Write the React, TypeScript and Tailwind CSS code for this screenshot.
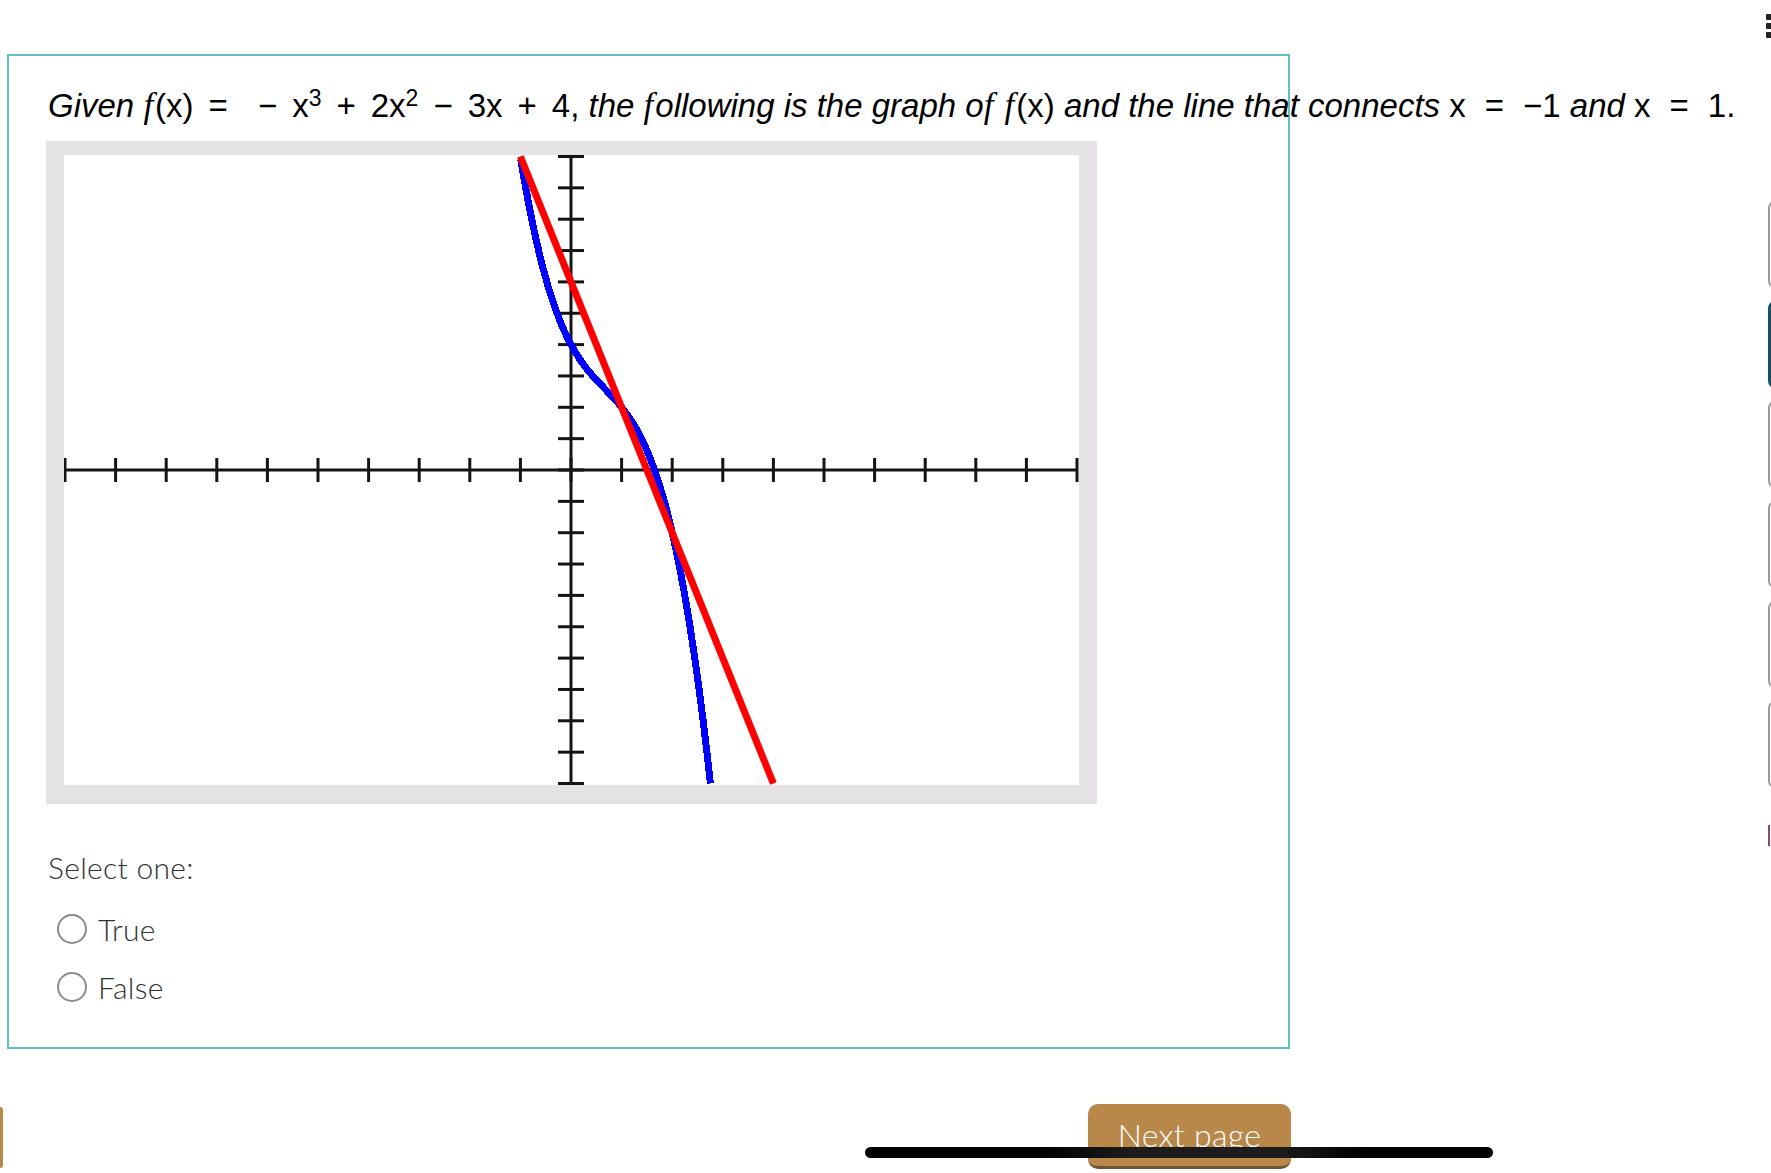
import React from 'react'

const X = (x: number) => 507 + x * 50.6
const Y = (y: number) => 315 - y * 31.35

const f = (x: number) => -x * x * x + 2 * x * x - 3 * x + 4

function bluePoints() {
  const pts: string[] = []
  for (let x = -0.99; x <= 2.756; x += 0.015) {
    const y = f(x)
    if (y > 10 || y < -10) continue
    pts.push(`${X(x).toFixed(1)},${Y(y).toFixed(1)}`)
  }
  pts.push(`${X(2.755).toFixed(1)},${Y(-10).toFixed(1)}`)
  return pts.join(' ')
}

function Graph() {
  const xTicks = Array.from({ length: 21 }, (_, i) => i - 10)
  const yTicks = Array.from({ length: 21 }, (_, i) => i - 10)
  return (
    <div className="w-[1051px] h-[663px] bg-[#e6e3e6] pl-[18px] pt-[14px]">
      <div className="w-[1015px] h-[630px] bg-white">
        <svg width="1015" height="630" viewBox="0 0 1015 630">
          <g stroke="#141414" strokeWidth="3">
            <line x1={X(-10)} y1={Y(0)} x2={X(10)} y2={Y(0)} />
            <line x1={X(0)} y1={Y(10)} x2={X(0)} y2={Y(-10)} />
            {xTicks.map((t) => (
              <line key={'x' + t} x1={X(t)} y1={Y(0) - 12} x2={X(t)} y2={Y(0) + 12} />
            ))}
            {yTicks.map((t) => (
              <line key={'y' + t} x1={X(0) - 13} y1={Y(t)} x2={X(0) + 13} y2={Y(t)} />
            ))}
          </g>
          <polyline
            points={bluePoints()}
            fill="none"
            stroke="#0000ff"
            strokeWidth="7"
            shapeRendering="crispEdges"
          />
          <line
            x1={X(-1)}
            y1={Y(10)}
            x2={X(4)}
            y2={Y(-10)}
            stroke="#ff0000"
            strokeWidth="7"
          />
        </svg>
      </div>
    </div>
  )
}

const F = () => <span className="font-['Liberation_Serif',serif] italic text-[35px] pr-[2px]">f</span>
const Op = ({ c }: { c: string }) => <span className="px-[15px]">{c}</span>
const Eq = ({ c }: { c: string }) => <span className="px-[19px]">{c}</span>

function Radio({ label }: { label: string }) {
  return (
    <div className="flex items-center h-[40px]">
      <span className="ml-[10px] w-[30px] h-[30px] rounded-full border-[2.5px] border-[#8c8c8c] bg-white" />
      <span className="ml-[11px] text-[30px] text-[#333] font-light tracking-[0.3px]">{label}</span>
    </div>
  )
}

export default function App() {
  return (
    <div className="relative w-full h-[1173px] overflow-hidden bg-white flex font-['Lato',sans-serif]">
      <div className="w-[1765px] shrink-0 pl-[7px] pt-[54px]">
        <div className="w-[1283px] h-[995px] border-2 border-[#5fbfc2] pl-[39px] pt-[30px]">
          <div className="h-[40px] leading-[40px] whitespace-nowrap text-[33px] text-black font-['Liberation_Sans',Arial,sans-serif]">
            <i>Given </i>
            <F />
            (x)
            <Op c="=" />
            <Op c="−" />x<sup className="text-[23px]">3</sup>
            <Op c="+" />
            2x<sup className="text-[23px]">2</sup>
            <Op c="−" />
            3x
            <Op c="+" />
            4,
            <i>
              {' '}the <F />ollowing is the graph o<F />{' '}
            </i>
            <F />
            (x)
            <i> and the line that connects </i>x<Eq c="=" />−1<i> and </i>x<Eq c="=" />1.
          </div>
          <div className="mt-[15px] -ml-[2px]">
            <Graph />
          </div>
          <div className="mt-[43px] h-[40px] leading-[40px] text-[30px] text-[#333] font-light tracking-[0.3px]">
            Select one:
          </div>
          <div className="mt-[22px] flex flex-col gap-[18px] -ml-[1px]">
            <Radio label="True" />
            <Radio label="False" />
          </div>
        </div>
        <div className="mt-[55px] flex justify-between w-[1291px] -ml-[7px]">
          <div className="w-[3px] h-[61px] mt-[3px] rounded-r-[4px] bg-[#b8874a]" />
          <div className="w-[203px] h-[65px] rounded-[10px] bg-[#b8874a] border-b-[3px] border-[#6e5431] flex items-center justify-center text-white text-[32px] font-light tracking-[0.3px]">
            Next page
          </div>
        </div>
      </div>
      <div className="w-[40px] shrink-0 pt-[14px] flex flex-col">
        <div className="flex flex-col gap-[3px] ml-[1px]">
          <span className="w-[6px] h-[6px] rounded-[1px] bg-[#222]" />
          <span className="w-[6px] h-[6px] rounded-[1px] bg-[#222]" />
          <span className="w-[6px] h-[6px] rounded-[1px] bg-[#222]" />
        </div>
        <div className="mt-[163px] ml-[3px] flex flex-col gap-[13px]">
          <div className="h-[87px] rounded-[7px] border-2 border-[#9a9a9a]" />
          <div className="h-[87px] rounded-[7px] bg-[#1b4e66]" />
          <div className="h-[87px] rounded-[7px] border-2 border-[#9a9a9a]" />
          <div className="h-[87px] rounded-[7px] border-2 border-[#9a9a9a]" />
          <div className="h-[87px] rounded-[7px] border-2 border-[#9a9a9a]" />
          <div className="h-[87px] rounded-[7px] border-2 border-[#9a9a9a]" />
          <div className="mt-[24px] w-[2px] h-[21px] bg-[#8a4a6a]" />
        </div>
      </div>
      <div className="absolute left-[865px] top-[1147px] w-[628px] h-[11px] rounded-full bg-[linear-gradient(90deg,#000_0%,#000_28%,#1c1c1c_42%,#1c1c1c_66%,#000_80%,#000_100%)]" />
    </div>
  )
}
